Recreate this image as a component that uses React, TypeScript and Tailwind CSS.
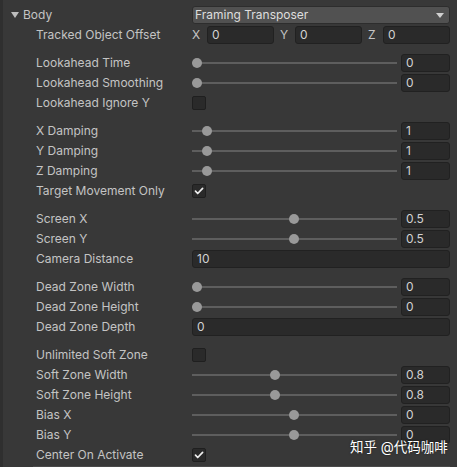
import React from "react";

type Row =
  | { kind: "slider"; label: string; value: string; frac: number }
  | { kind: "check"; label: string; checked: boolean }
  | { kind: "field"; label: string; value: string };

const groups: Row[][] = [
  [
    { kind: "slider", label: "Lookahead Time", value: "0", frac: 0 },
    { kind: "slider", label: "Lookahead Smoothing", value: "0", frac: 0 },
    { kind: "check", label: "Lookahead Ignore Y", checked: false },
  ],
  [
    { kind: "slider", label: "X Damping", value: "1", frac: 0.05 },
    { kind: "slider", label: "Y Damping", value: "1", frac: 0.05 },
    { kind: "slider", label: "Z Damping", value: "1", frac: 0.05 },
    { kind: "check", label: "Target Movement Only", checked: true },
  ],
  [
    { kind: "slider", label: "Screen X", value: "0.5", frac: 0.5 },
    { kind: "slider", label: "Screen Y", value: "0.5", frac: 0.5 },
    { kind: "field", label: "Camera Distance", value: "10" },
  ],
  [
    { kind: "slider", label: "Dead Zone Width", value: "0", frac: 0 },
    { kind: "slider", label: "Dead Zone Height", value: "0", frac: 0 },
    { kind: "field", label: "Dead Zone Depth", value: "0" },
  ],
  [
    { kind: "check", label: "Unlimited Soft Zone", checked: false },
    { kind: "slider", label: "Soft Zone Width", value: "0.8", frac: 0.4 },
    { kind: "slider", label: "Soft Zone Height", value: "0.8", frac: 0.4 },
    { kind: "slider", label: "Bias X", value: "0", frac: 0.5 },
    { kind: "slider", label: "Bias Y", value: "0", frac: 0.5 },
    { kind: "check", label: "Center On Activate", checked: true },
  ],
];

function Field({ value }: { value: string }) {
  return (
    <div className="h-[18px] flex-1 flex items-center pl-[4px] rounded-[3px] bg-[#2a2a2a] border border-[#212121] text-[#d2d2d2]">
      {value}
    </div>
  );
}

function Slider({ value, frac }: { value: string; frac: number }) {
  return (
    <div className="flex flex-1 items-center gap-[4px] h-full">
      <div className="relative w-[205px] h-full flex items-center">
        <div className="h-[2px] w-full bg-[#5e5e5e]" />
        {/* thumb */}
        <div
          className="absolute top-[5px] w-[10px] h-[10px] rounded-full bg-[#999999]"
          style={{ left: frac * 194 }}
        />
      </div>
      <Field value={value} />
    </div>
  );
}

function Check({ checked }: { checked: boolean }) {
  return (
    <div className="w-[14px] h-[14px] rounded-[2px] bg-[#2a2a2a] border border-[#1f1f1f] flex items-center justify-center">
      {checked && (
        <svg width="10" height="10" viewBox="0 0 10 10" fill="none">
          <path d="M1.5 5.2l2.2 2.3L8.6 2.4" stroke="#eeeeee" strokeWidth="1.7" strokeLinecap="round" strokeLinejoin="round" />
        </svg>
      )}
    </div>
  );
}

function PropRow({ row }: { row: Row }) {
  return (
    <div className="flex items-center h-5">
      <div className="w-[192px] shrink-0 pl-[36px]">{row.label}</div>
      <div className="flex flex-1 items-center h-full">
        {row.kind === "slider" && <Slider value={row.value} frac={row.frac} />}
        {row.kind === "check" && <Check checked={row.checked} />}
        {row.kind === "field" && <Field value={row.value} />}
      </div>
    </div>
  );
}

export default function App() {
  return (
    <div
      className="relative w-[457px] h-[467px] overflow-hidden bg-[#383838] text-[12px] text-[#c4c4c4] border-l-[3px] border-[#2f2f2f]"
      style={{ fontFamily: "Inter, 'Noto Sans CJK SC', sans-serif" }}
    >
      <div className="flex flex-col pt-[5px] pr-[7px] ml-[-3px]">
        <div className="flex items-center h-5">
          <div className="w-[192px] shrink-0 flex items-center pl-[11px] gap-[4px]">
            <svg width="8" height="6" viewBox="0 0 8 6">
              <path d="M0 0h8L4 6z" fill="#bdbdbd" />
            </svg>
            <span>Body</span>
          </div>
          <div className="flex flex-1 items-center justify-between h-[18px] px-[2px] pr-[5px] rounded-[3px] bg-[#515151] border border-[#2d2d2d] text-[#dedede]">
            <span>Framing Transposer</span>
            <svg width="8" height="5" viewBox="0 0 8 5">
              <path d="M0 0h8L4 5z" fill="#d0d0d0" />
            </svg>
          </div>
        </div>
        <div className="flex items-center h-5">
          <div className="w-[192px] shrink-0 pl-[36px]">Tracked Object Offset</div>
          <div className="grid flex-1 grid-cols-3 gap-[6px]">
            {["X", "Y", "Z"].map((a) => (
              <div key={a} className="flex items-center">
                <span className="w-[15px] shrink-0">{a}</span>
                <Field value="0" />
              </div>
            ))}
          </div>
        </div>
        {groups.map((g, i) => (
          <div key={i} className="flex flex-col mt-[8px]">
            {g.map((r) => (
              <PropRow key={r.label} row={r} />
            ))}
          </div>
        ))}
        <div className="ml-[33px] mt-[1px] h-[1px] bg-[#4a4a4a]" />
      </div>
      <div className="absolute left-[347px] top-[438px] text-[13.5px] leading-[18px] text-white [text-shadow:0_0_2px_rgba(0,0,0,0.6)]">
        知乎 @代码咖啡
      </div>
    </div>
  );
}
